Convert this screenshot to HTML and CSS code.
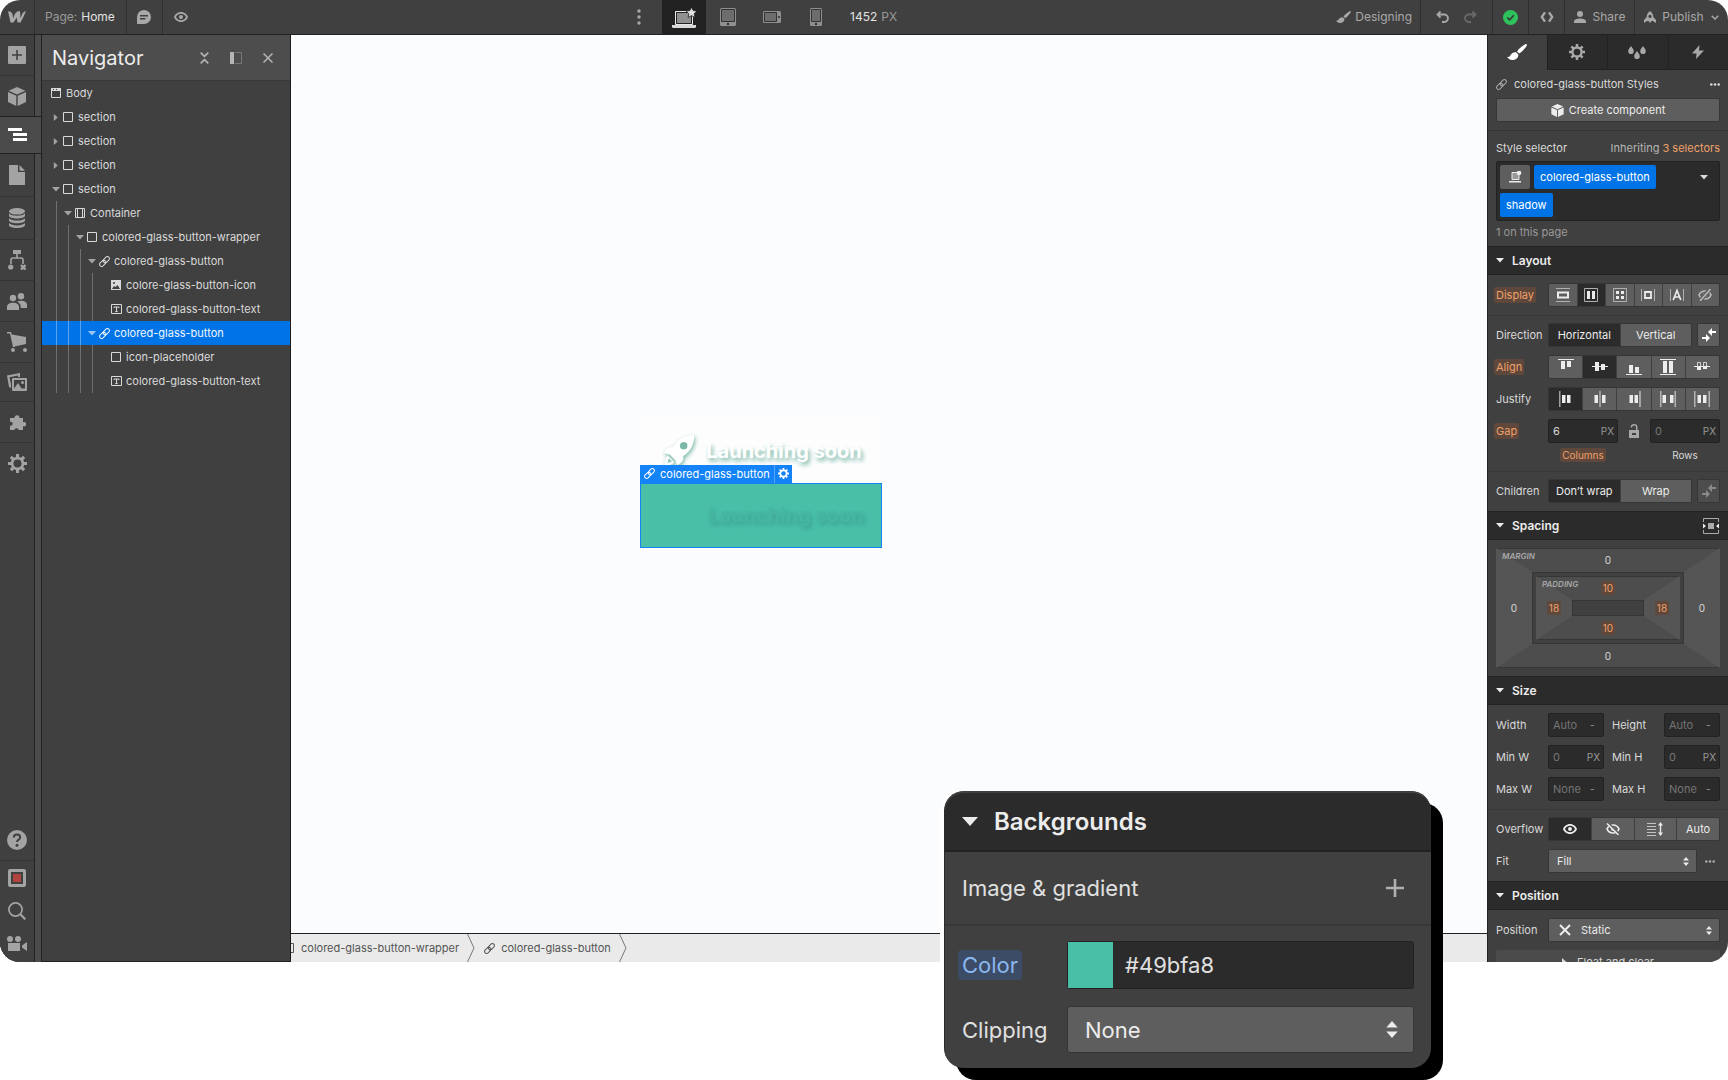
FILE: index.html
```html
<!DOCTYPE html>
<html lang="en">
<head>
<meta charset="utf-8">
<title>Designer - Home</title>
<link rel="stylesheet" href="styles.css">
</head>
<body>
<!-- icon sprite -->
<svg class="sprite" aria-hidden="true">
  <symbol id="i-logo" viewBox="0 0 18 12"><path d="M0 .3C2.500.3 4 1.300 4.500 3.500l.8 4C5.900 5 7 1.500 10 .3h2l.6 7C13.600 4.500 14.500.6 18 .3c-1.500 3.700-3.300 7.500-5.500 11.200h-3l-.8-5-3.200 5h-3z"/></symbol>
  <symbol id="i-comment" viewBox="0 0 14 14"><path fill-rule="evenodd" d="M7 0a7 7 0 1 1 0 14H0V7a7 7 0 0 1 7-7zM3 5v1.500h8V5zm0 3v1.500h5.500V8z"/></symbol>
  <symbol id="i-eye" viewBox="0 0 14 10"><path fill-rule="evenodd" d="M7 0c3.500 0 6 2.400 7 5-1 2.600-3.500 5-7 5S1 7.600 0 5c1-2.600 3.500-5 7-5zm0 1.800C4.500 1.800 2.800 3.200 2 5c.8 1.800 2.500 3.200 5 3.200s4.200-1.400 5-3.200c-.8-1.800-2.500-3.200-5-3.200zM7 3a2 2 0 1 1 0 4 2 2 0 0 1 0-4z"/></symbol>
  <symbol id="i-eye-off" viewBox="0 0 14 12"><path d="M1 6c1-2.300 3-4 6-4s5 1.700 6 4c-1 2.300-3 4-6 4S2 8.300 1 6z" fill="none" stroke="currentColor" stroke-width="1.700"/><circle cx="7" cy="6" r="2"/><path d="M1.500 0l11 11" stroke="#5e5e5e" stroke-width="3"/><path d="M1 .5L12.500 12" stroke="currentColor" stroke-width="1.500"/></symbol>
  <symbol id="i-dots-v" viewBox="0 0 4 16"><circle cx="2" cy="2" r="1.700"/><circle cx="2" cy="8" r="1.700"/><circle cx="2" cy="14" r="1.700"/></symbol>
  <symbol id="i-desktop" viewBox="0 0 24 21"><path d="M3.500 4.500h17v13h-17z" fill="#8f8f8f" stroke="#e8e8e8"/><path d="M4.500 5.500h15v11h-15z" fill="none" stroke="#222"/><path d="M0 18h24v1.500a1.500 1.500 0 0 1-1.500 1.500h-21A1.500 1.500 0 0 1 0 19.500z" fill="#d9d9d9"/><path d="M19.500.2l1.700 3.400 3.800.5-2.800 2.600.7 3.800-3.400-1.900-3.400 1.900.7-3.800L14 4.100l3.800-.5z" fill="#e2e2e2" stroke="#222" stroke-width=".8"/></symbol>
  <symbol id="i-tablet" viewBox="0 0 16 18"><rect width="16" height="18" rx="1.500" fill="#8f8f8f"/><path d="M1.500 1.500h13v12h-13z" fill="#6d6d6d" stroke="#333"/><circle cx="8" cy="16" r="1.200" fill="#333"/></symbol>
  <symbol id="i-landscape" viewBox="0 0 18 12"><rect width="18" height="12" rx="1.500" fill="#8f8f8f"/><path d="M1.500 1.500h12v9h-12z" fill="#6d6d6d" stroke="#333"/><circle cx="16" cy="6" r="1.100" fill="#333"/></symbol>
  <symbol id="i-phone" viewBox="0 0 12 18"><rect width="12" height="18" rx="1.500" fill="#8f8f8f"/><path d="M1.500 1.500h9v12h-9z" fill="#6d6d6d" stroke="#333"/><circle cx="6" cy="16" r="1.200" fill="#333"/></symbol>
  <symbol id="i-brush" viewBox="0 0 20 16"><path d="M18.300.2c1-.5 2 .4 1.400 1.500-1.300 2.300-4.500 6.200-7.600 7.800L10 7.400C11.800 4.700 15.800 1.500 18.300.2zM9 8.300l2.300 2.300C11.500 14 8.500 16 5.200 16 2.900 16 .9 14.800 0 12.800c1 .2 2.300.1 3-.9C4.200 9.800 6.300 7.900 9 8.300z"/></symbol>
  <symbol id="i-undo" viewBox="0 0 13 12"><path d="M4.500.5L1.500 3.500l3 3M1.800 3.500h6.400a3.700 3.700 0 0 1 0 7.500H6" fill="none" stroke="currentColor" stroke-width="1.900"/></symbol>
  <symbol id="i-redo" viewBox="0 0 13 12"><path d="M8.500.5l3 3-3 3M11.200 3.500H4.800a3.700 3.700 0 0 0 0 7.500H7" fill="none" stroke="currentColor" stroke-width="1.900"/></symbol>
  <symbol id="i-check" viewBox="0 0 15 15"><circle cx="7.500" cy="7.500" r="7.500"/><path d="M4.300 7.500l2.300 2.300 4.200-4.500" fill="none" stroke="#333" stroke-width="1.600"/></symbol>
  <symbol id="i-code" viewBox="0 0 14 10"><path d="M5 .3L1.800 5 5 9.700M9 .3L12.200 5 9 9.700" fill="none" stroke="currentColor" stroke-width="2.300"/></symbol>
  <symbol id="i-user" viewBox="0 0 12 12"><circle cx="6" cy="3" r="3"/><path d="M0 12v-1.500C0 8.500 3 7.500 6 7.500s6 1 6 3V12z"/></symbol>
  <symbol id="i-publish" viewBox="0 0 12 12"><path fill-rule="evenodd" d="M6 0c2 1.400 3.300 3.500 3.300 6L12 9v3l-3-2H7.500L6 12 4.500 10H3l-3 2V9l2.700-3C2.700 3.500 4 1.400 6 0zm0 3.800A1.600 1.600 0 1 0 6 7a1.600 1.600 0 0 0 0-3.200z"/></symbol>
  <symbol id="i-chevron" viewBox="0 0 8 5"><path d="M.7.7L4 4 7.300.7" fill="none" stroke="currentColor" stroke-width="1.500"/></symbol>
  <symbol id="i-plus-box" viewBox="0 0 18 18"><path fill-rule="evenodd" d="M1 0h16a1 1 0 0 1 1 1v16a1 1 0 0 1-1 1H1a1 1 0 0 1-1-1V1a1 1 0 0 1 1-1zm7.200 4v4.200H4v1.600h4.200V14h1.600V9.800H14V8.200H9.800V4z"/></symbol>
  <symbol id="i-cube" viewBox="0 0 18 19"><path d="M9 0l8.300 3.700L9 7.500.7 3.700zM0 5l8.300 3.800V19L0 15zM18 5L9.700 8.800V19l8.300-4z"/></symbol>
  <symbol id="i-nav" viewBox="0 0 19 13"><path d="M0 0h14v3H0zM5 5h14v3H5zM5 10h14v3H5z"/></symbol>
  <symbol id="i-page" viewBox="0 0 16 20"><path d="M0 0h9v7h7v13H0zM10.500 0L16 5.700h-5.500z"/></symbol>
  <symbol id="i-cms" viewBox="0 0 16 20"><ellipse cx="8" cy="3.300" rx="8" ry="3.300"/><path d="M0 5.300c1.500 1.800 4.500 2.500 8 2.500s6.500-.7 8-2.500v2.400c0 1.500-3.500 2.700-8 2.700S0 9.200 0 7.700z"/><path d="M0 10.300c1.500 1.500 4.500 2.300 8 2.300s6.500-.8 8-2.300v2.200c0 1.500-3.500 2.700-8 2.700s-8-1.200-8-2.700z"/><path d="M0 15.100c1.500 1.500 4.500 2.300 8 2.300s6.500-.8 8-2.300v2.200C16 18.800 12.500 20 8 20s-8-1.200-8-2.700z"/></symbol>
  <symbol id="i-tree" viewBox="0 0 18 20"><path d="M5 0h8v4H5z"/><path d="M9 4v4M3 14v-4a2 2 0 0 1 2-2h8a2 2 0 0 1 2 2v4" fill="none" stroke="currentColor" stroke-width="1.600"/><circle cx="2.700" cy="17" r="2.600"/><path d="M13 15l4.500 4.500M17.500 15L13 19.500" stroke="currentColor" stroke-width="2.400"/></symbol>
  <symbol id="i-users" viewBox="0 0 20 17"><circle cx="6" cy="5" r="3.200"/><circle cx="14" cy="3.200" r="3.200"/><path d="M0 17v-3c0-2.500 2-4.300 6-4.300s6 1.800 6 4.300v3zM10.500 8.700C11.500 8 12.500 7.800 14 7.800c4 0 6 1.700 6 4V15h-6.300v-1.500c0-2-1.200-3.800-3.200-4.800z"/></symbol>
  <symbol id="i-cart" viewBox="0 0 20 20"><path d="M0 0h4l.8 2.500L19 5v7L7.500 14.500 8 15H6L3 1.500H0z"/><circle cx="6" cy="18" r="2"/><circle cx="18" cy="18" r="2"/></symbol>
  <symbol id="i-assets" viewBox="0 0 20 18"><path d="M0 2.500L13 0v4h-2V2.600L2.500 4.200 4 11v4L2 14z"/><path fill-rule="evenodd" d="M6 5h13a1 1 0 0 1 1 1v11a1 1 0 0 1-1 1H6a1 1 0 0 1-1-1V6a1 1 0 0 1 1-1zm1 10.500L11 10l3.500 5.500H18V7H7z"/><circle cx="15.500" cy="9.500" r="1.500"/></symbol>
  <symbol id="i-puzzle" viewBox="0 0 17 17"><path d="M1 4h4.500a2.500 2.500 0 1 1 5-.5V4H14v4.300a2.200 2.200 0 1 1 0 3.800V16h-4.200a2.300 2.300 0 0 0-4.500 0H1v-4.300h.7a2 2 0 0 0 0-4H1z"/></symbol>
  <symbol id="i-gear" viewBox="0 0 20 20"><path d="M10 0v20M0 10h20M3 3l14 14M17 3L3 17" stroke="currentColor" stroke-width="3.200"/><circle cx="10" cy="10" r="5.700" fill="none" stroke="currentColor" stroke-width="3"/><circle cx="10" cy="10" r="4.200" fill="var(--hole, #404040)"/></symbol>
  <symbol id="i-help" viewBox="0 0 20 20"><circle cx="10" cy="10" r="10"/><path d="M6.800 7.500C6.800 5.500 8.200 4.500 10 4.500s3.200 1.100 3.200 2.900c0 2.200-3.200 2.300-3.200 4.600" fill="none" stroke="#404040" stroke-width="2"/><circle cx="10" cy="15.200" r="1.500" fill="#404040"/></symbol>
  <symbol id="i-record" viewBox="0 0 18 18"><rect x="1.500" y="1.500" width="15" height="15" rx=".5" fill="none" stroke="currentColor" stroke-width="3"/><path d="M5 5h8v8H5z" fill="#b0453f"/></symbol>
  <symbol id="i-search" viewBox="0 0 18 18"><circle cx="7.500" cy="7.500" r="6.600" fill="none" stroke="currentColor" stroke-width="1.700"/><path d="M12.300 12.300l5 5" stroke="currentColor" stroke-width="2.200"/></symbol>
  <symbol id="i-camera" viewBox="0 0 20 15"><circle cx="3" cy="3" r="3"/><circle cx="11" cy="3" r="3"/><path d="M1 7h12v8H1zM15 9.500L20 6v9l-5-3.500z"/></symbol>
  <symbol id="i-collapse" viewBox="0 0 9 12"><path d="M.7.7l3.800 3.600L8.300.7M.7 11.300l3.800-3.600 3.800 3.600" fill="none" stroke="currentColor" stroke-width="1.700"/></symbol>
  <symbol id="i-dock" viewBox="0 0 12 12"><path d="M0 0h4v12H0z"/><path d="M5 .5h6.500v11H5" fill="none" stroke="#777"/></symbol>
  <symbol id="i-close" viewBox="0 0 10 10"><path d="M.5.5l9 9M9.500.5l-9 9" stroke="currentColor" stroke-width="1.500"/></symbol>
  <symbol id="i-body" viewBox="0 0 11 11"><path d="M.5.500h9v9H.5z" fill="none" stroke="currentColor"/><path d="M0 0h10v3H0z"/><path d="M2 1.500h1M5 1.500h1" stroke="#404040"/></symbol>
  <symbol id="i-box" viewBox="0 0 11 11"><path d="M.5.5h9v9h-9z" fill="none" stroke="currentColor"/></symbol>
  <symbol id="i-container" viewBox="0 0 11 11"><path d="M.5.5h9v9h-9zM2.500.5v9M7.500.5v9" fill="none" stroke="currentColor"/></symbol>
  <symbol id="i-link" viewBox="0 0 11 11"><g fill="none" stroke="currentColor"><rect x="-3.500" y="-2" width="7" height="4" rx="2" transform="translate(3.700 7.300) rotate(-45)"/><rect x="-3.500" y="-2" width="7" height="4" rx="2" transform="translate(7.300 3.700) rotate(-45)"/></g></symbol>
  <symbol id="i-image" viewBox="0 0 11 11"><path fill-rule="evenodd" d="M0 0h10v10H0zm1 9h8L6.500 5 4.500 7 3 6zM3 2a1 1 0 1 0 0 2 1 1 0 0 0 0-2z"/></symbol>
  <symbol id="i-text" viewBox="0 0 11 11"><path d="M.5.5h10v9H.5z" fill="none" stroke="currentColor"/><path d="M3 4V3h5v1M5.500 3v5M4.300 7.600h2.400" fill="none" stroke="currentColor"/></symbol>
  <symbol id="i-caret" viewBox="0 0 8 5"><path d="M0 0h8L4 4.500z"/></symbol>
  <symbol id="i-caret-r" viewBox="0 0 5 8"><path d="M0 0l4.500 4L0 8z"/></symbol>
  <symbol id="i-drops" viewBox="0 0 18 14"><path d="M3 1c1.500 2 2.800 3.700 2.800 5.300a2.800 2.800 0 0 1-5.600 0C.2 4.700 1.500 3 3 1zM15 1c1.500 2 2.800 3.700 2.800 5.300a2.800 2.800 0 0 1-5.600 0C12.200 4.700 13.500 3 15 1zM9 6c1.500 2 2.800 3.500 2.800 5.200a2.800 2.800 0 0 1-5.600 0C6.200 9.500 7.500 8 9 6z"/></symbol>
  <symbol id="i-bolt" viewBox="0 0 12 14"><path d="M7.500 0L0 8.500h4.500L4 14l8-8.500H7z"/></symbol>
  <symbol id="i-dots" viewBox="0 0 10 3"><circle cx="1.300" cy="1.500" r="1.300"/><circle cx="5" cy="1.500" r="1.300"/><circle cx="8.700" cy="1.500" r="1.300"/></symbol>
  <symbol id="i-state" viewBox="0 0 13 12"><path d="M3 1.500h7v7H3z" fill="#999" stroke="currentColor"/><path d="M0 10h12v1.500H0z"/><circle cx="10" cy="2" r="2.300"/></symbol>
  <symbol id="i-block" viewBox="0 0 14 14"><path d="M0 .5h14M0 13.500h14" stroke="#b0b0b0"/><path d="M2 4.500h10v5H2z" fill="none" stroke="currentColor" stroke-width="2"/></symbol>
  <symbol id="i-flex" viewBox="0 0 14 14"><path d="M.5.5h13v13H.5z" fill="none" stroke="#b0b0b0"/><path d="M3 3h3v8H3zM8 3h3v8H8z"/></symbol>
  <symbol id="i-grid" viewBox="0 0 14 14"><path d="M.5.5h13v13H.5z" fill="none" stroke="#b0b0b0"/><path d="M3 3h3v3H3zM8 3h3v3H8zM3 8h3v3H3zM8 8h3v3H8z"/></symbol>
  <symbol id="i-inline-block" viewBox="0 0 14 14"><path d="M.5 1v12M13.500 1v12" stroke="#b0b0b0"/><path d="M4 4h6v6H4z" fill="none" stroke="currentColor" stroke-width="1.800"/></symbol>
  <symbol id="i-inline" viewBox="0 0 14 14"><path d="M.5 1v12M13.500 1v12" stroke="#b0b0b0"/><path d="M3.200 12L7 2.500 10.800 12M4.500 9h5" fill="none" stroke="currentColor" stroke-width="1.700"/></symbol>
  <symbol id="i-none" viewBox="0 0 14 12"><path d="M1 6c1-2.500 3-4 6-4s5 1.500 6 4c-1 2.500-3 4-6 4S2 8.500 1 6z" fill="none" stroke="#bbb" stroke-width="1.600"/><circle cx="7" cy="6" r="2.300" fill="#bbb"/><path d="M12 0L2 12" stroke="#5e5e5e" stroke-width="4"/><path d="M12.500 0L2 12" stroke="#bbb" stroke-width="1.500"/></symbol>
  <symbol id="i-reverse" viewBox="0 0 14 14"><path d="M6 4l4-4v3h4v2h-4v3zM8 10l-4 4v-3H0V9h4V6z"/></symbol>
  <symbol id="i-a-start" viewBox="0 0 16 16"><path d="M0 0h16v1H0zM3 2h4v8H3zM9 2h4v6H9z"/></symbol>
  <symbol id="i-a-center" viewBox="0 0 16 16"><path d="M0 7h16v1H0zM3 3h4v9H3zM9 5h4v6H9z"/></symbol>
  <symbol id="i-a-end" viewBox="0 0 16 16"><path d="M0 15h16v1H0zM3 6h4v8H3zM9 8h4v6H9z"/></symbol>
  <symbol id="i-a-stretch" viewBox="0 0 16 16"><path d="M0 0h16v1H0zM0 15h16v1H0zM3 2h4v12H3zM9 2h4v12H9z"/></symbol>
  <symbol id="i-a-base" viewBox="0 0 16 16"><path d="M0 7h16v1H0zM3 7h4v4H3zM9 7h4v3H9z"/><path d="M3.500 7V3.500h3V7M9.500 7V3.500h3V7" fill="none" stroke="currentColor" opacity=".8"/></symbol>
  <symbol id="i-j-start" viewBox="0 0 16 16"><path d="M1 0h1.500v16H1z" opacity=".6"/><path d="M4 4h3.500v8H4zM9 4h3.500v8H9z"/></symbol>
  <symbol id="i-j-center" viewBox="0 0 16 16"><path d="M7.300 0h1.400v16H7.300z" opacity=".6"/><path d="M2.500 4H6v8H2.500zM10 4h3.500v8H10z"/></symbol>
  <symbol id="i-j-end" viewBox="0 0 16 16"><path d="M13.500 0h1v16h-1zM3.500 4H7v8H3.500zM8.500 4H12v8H8.500z"/></symbol>
  <symbol id="i-j-between" viewBox="0 0 16 16"><path d="M0 0h1.500v16H0zM14.500 0H16v16h-1.500z" opacity=".6"/><path d="M2.500 4H6v8H2.500zM10 4h3.500v8H10z"/></symbol>
  <symbol id="i-j-around" viewBox="0 0 16 16"><path d="M0 0h1.500v16H0zM14.500 0H16v16h-1.500z" opacity=".6"/><path d="M3.500 4H7v8H3.500zM9 4h3.500v8H9z"/></symbol>
  <symbol id="i-lock" viewBox="0 0 10 14"><path fill-rule="evenodd" d="M0 6h10v8H0zm3 3v2h4V9z"/><path d="M2.500 3.500V3c0-1.300 1-2.200 2.500-2.200S7.700 1.700 7.700 3v3" fill="none" stroke="currentColor" stroke-width="1.500"/></symbol>
  <symbol id="i-spacing" viewBox="0 0 16 16"><path d="M.5 4V.5h15V4M.5 12v3.500h15V12" fill="none" stroke="#aaa"/><path d="M5 5h6v6H5z" fill="#aaa"/><path d="M0 5.500L3 8l-3 2.500zM16 5.500L13 8l3 2.500z"/></symbol>
  <symbol id="i-scroll" viewBox="0 0 16 14"><path d="M0 1.500h9M0 4.500h9M0 7.500h9M0 10.500h9M0 13.500h9" stroke="#c4c4c4"/><path d="M13.500 0L16 3.500h-1.800v7H16L13.500 14 11 10.500h1.800v-7H11z"/></symbol>
  <symbol id="i-sort" viewBox="0 0 6 9"><path d="M3 0l3 3.500H0zM3 9l3-3.500H0z"/></symbol>
  <symbol id="i-cross" viewBox="0 0 12 12"><path d="M1 1l10 10M11 1L1 11" stroke="currentColor" stroke-width="2"/></symbol>
  <symbol id="i-rocket" viewBox="0 0 34 34"><path fill-rule="evenodd" d="M33 0c.5 10-3.500 17-11.500 22.500.6 5-2.500 8-6.500 9.500l-2-5.500-5.500-5.500L1 19c1.500-4 5-7 10-6.500C16 4 23 .5 33 0zM22 7.500a4 4 0 1 0 0 8 4 4 0 0 0 0-8z"/><circle cx="22" cy="11.500" r="3.500" fill="#79b8a9"/><path d="M5 22l7 7c-2 2.500-6 4-10.500 4C1.500 28.500 2.700 24.500 5 22z"/><path d="M6.500 25l3 3c-1 1-2.500 1.500-4.500 1.500 0-2 .5-3.500 1.500-4.500z" fill="#8fc4b6"/></symbol>
  <symbol id="i-plus" viewBox="0 0 18 18"><path d="M7.700 0h2.600v7.700H18v2.600h-7.700V18H7.700v-7.700H0V7.700h7.700z"/></symbol>
  <symbol id="i-crumb" viewBox="0 0 8 28"><path d="M.5 0l6.500 14-6.500 14" fill="none" stroke="#777"/></symbol>
</svg>

<div class="page">
<div class="app">
  <header class="topbar">
    <div class="topbar-left">
      <button class="logo" aria-label="Menu"><svg width="18" height="12"><use href="#i-logo"/></svg></button>
      <button class="page-name"><span class="muted">Page:</span> Home</button>
      <button class="tool" aria-label="Comments"><svg width="14" height="14"><use href="#i-comment"/></svg></button>
      <button class="tool plain" aria-label="Preview"><svg width="14" height="10"><use href="#i-eye"/></svg></button>
    </div>
    <div class="breakpoints">
      <button class="bp-more" aria-label="More breakpoints"><svg width="4" height="16"><use href="#i-dots-v"/></svg></button>
      <button class="bp active" aria-label="Desktop"><svg width="24" height="21" class="spill"><use href="#i-desktop"/></svg></button>
      <button class="bp" aria-label="Tablet"><svg width="16" height="18"><use href="#i-tablet"/></svg></button>
      <button class="bp" aria-label="Mobile landscape"><svg width="18" height="12"><use href="#i-landscape"/></svg></button>
      <button class="bp" aria-label="Mobile portrait"><svg width="12" height="18"><use href="#i-phone"/></svg></button>
      <button class="canvas-width">1452 <span class="muted">PX</span></button>
    </div>
    <div class="topbar-right">
      <button class="mode"><svg width="15" height="14"><use href="#i-brush"/></svg>Designing</button>
      <div class="history">
        <button aria-label="Undo"><svg width="13" height="12"><use href="#i-undo"/></svg></button>
        <button aria-label="Redo" class="dim"><svg width="13" height="12"><use href="#i-redo"/></svg></button>
      </div>
      <button class="tool saved" aria-label="Saved"><svg width="15" height="15"><use href="#i-check"/></svg></button>
      <button class="tool" aria-label="Export code"><svg width="14" height="10"><use href="#i-code"/></svg></button>
      <button class="share"><svg width="12" height="12"><use href="#i-user"/></svg>Share</button>
      <button class="publish"><svg width="12" height="12"><use href="#i-publish"/></svg>Publish<svg class="chev" width="8" height="5"><use href="#i-chevron"/></svg></button>
    </div>
  </header>

  <div class="workspace">
    <nav class="rail">
      <button aria-label="Add"><svg width="18" height="18"><use href="#i-plus-box"/></svg></button>
      <button aria-label="Components"><svg width="18" height="19"><use href="#i-cube"/></svg></button>
      <button class="active" aria-label="Navigator"><svg width="19" height="13"><use href="#i-nav"/></svg></button>
      <button class="tall" aria-label="Pages"><svg width="16" height="20"><use href="#i-page"/></svg></button>
      <button class="tall" aria-label="CMS"><svg width="16" height="20"><use href="#i-cms"/></svg></button>
      <button aria-label="Logic"><svg width="18" height="20"><use href="#i-tree"/></svg></button>
      <button aria-label="Users"><svg width="20" height="17"><use href="#i-users"/></svg></button>
      <button aria-label="Ecommerce"><svg width="20" height="20"><use href="#i-cart"/></svg></button>
      <button class="short" aria-label="Assets"><svg width="20" height="18"><use href="#i-assets"/></svg></button>
      <button aria-label="Apps"><svg width="17" height="17"><use href="#i-puzzle"/></svg></button>
      <button class="plain" aria-label="Settings"><svg width="19" height="19"><use href="#i-gear"/></svg></button>
      <div class="rail-end">
        <button class="help" aria-label="Help"><svg width="20" height="20"><use href="#i-help"/></svg></button>
        <button aria-label="Audit"><svg width="18" height="18"><use href="#i-record"/></svg></button>
        <button aria-label="Search"><svg width="18" height="18"><use href="#i-search"/></svg></button>
        <button aria-label="Video tutorials"><svg width="20" height="15"><use href="#i-camera"/></svg></button>
      </div>
    </nav>

    <aside class="navigator">
      <div class="nav-head">
        <h1>Navigator</h1>
        <button aria-label="Collapse all"><svg width="9" height="12"><use href="#i-collapse"/></svg></button>
        <button aria-label="Pin panel"><svg width="12" height="12"><use href="#i-dock"/></svg></button>
        <button aria-label="Close"><svg width="10" height="10"><use href="#i-close"/></svg></button>
      </div>
      <ul class="tree">
        <li><button class="root"><svg class="type"><use href="#i-body"/></svg>Body</button></li>
        <li><button><svg class="arrow right"><use href="#i-caret-r"/></svg><svg class="type"><use href="#i-box"/></svg>section</button></li>
        <li><button><svg class="arrow right"><use href="#i-caret-r"/></svg><svg class="type"><use href="#i-box"/></svg>section</button></li>
        <li><button><svg class="arrow right"><use href="#i-caret-r"/></svg><svg class="type"><use href="#i-box"/></svg>section</button></li>
        <li><button><svg class="arrow"><use href="#i-caret"/></svg><svg class="type"><use href="#i-box"/></svg>section</button></li>
        <li><button><i></i><svg class="arrow"><use href="#i-caret"/></svg><svg class="type"><use href="#i-container"/></svg>Container</button></li>
        <li><button><i></i><i></i><svg class="arrow"><use href="#i-caret"/></svg><svg class="type"><use href="#i-box"/></svg>colored-glass-button-wrapper</button></li>
        <li><button><i></i><i></i><i></i><svg class="arrow"><use href="#i-caret"/></svg><svg class="type"><use href="#i-link"/></svg>colored-glass-button</button></li>
        <li><button><i></i><i></i><i></i><i></i><svg class="arrow"></svg><svg class="type"><use href="#i-image"/></svg>colore-glass-button-icon</button></li>
        <li><button><i></i><i></i><i></i><i></i><svg class="arrow"></svg><svg class="type"><use href="#i-text"/></svg>colored-glass-button-text</button></li>
        <li><button class="selected"><i></i><i></i><i></i><svg class="arrow"><use href="#i-caret"/></svg><svg class="type"><use href="#i-link"/></svg>colored-glass-button</button></li>
        <li><button><i></i><i></i><i></i><i></i><svg class="arrow"></svg><svg class="type"><use href="#i-box"/></svg>icon-placeholder</button></li>
        <li><button><i></i><i></i><i></i><i></i><svg class="arrow"></svg><svg class="type"><use href="#i-text"/></svg>colored-glass-button-text</button></li>
      </ul>
    </aside>

    <main class="stage">
      <div class="canvas">
        <div class="container">
          <div class="wrapper">
            <a class="glass-button first" href="#"><svg width="32" height="32"><use href="#i-rocket"/></svg><span>Launching soon</span></a>
            <a class="glass-button shadow" href="#"><span class="icon-placeholder"></span><span>Launching soon</span></a>
            <div class="element-tag">
              <span class="tag-name"><svg width="11" height="11"><use href="#i-link"/></svg>colored-glass-button</span>
              <button aria-label="Element settings"><svg width="11" height="11"><use href="#i-gear"/></svg></button>
            </div>
          </div>
        </div>
      </div>
      <nav class="crumbs">
        <a href="#" class="cut"><svg width="11" height="11"><use href="#i-box"/></svg>colored-glass-button-wrapper</a>
        <svg width="8" height="28"><use href="#i-crumb"/></svg>
        <a href="#"><svg width="11" height="11"><use href="#i-link"/></svg>colored-glass-button</a>
        <svg width="8" height="28"><use href="#i-crumb"/></svg>
      </nav>
    </main>

    <aside class="style-panel">
      <div class="tabs">
        <button class="active" aria-label="Style"><svg width="20" height="16"><use href="#i-brush"/></svg></button>
        <button aria-label="Settings"><svg width="16" height="16"><use href="#i-gear"/></svg></button>
        <button aria-label="Style manager"><svg width="18" height="14"><use href="#i-drops"/></svg></button>
        <button aria-label="Interactions"><svg width="12" height="14"><use href="#i-bolt"/></svg></button>
      </div>
      <div class="element-head">
        <div class="element-name"><svg width="11" height="11"><use href="#i-link"/></svg><span>colored-glass-button Styles</span><button aria-label="More"><svg width="10" height="3"><use href="#i-dots"/></svg></button></div>
        <button class="create"><svg width="13" height="13"><use href="#i-cube"/></svg>Create component</button>
      </div>
      <div class="selector">
        <div class="selector-title"><span>Style selector</span><span class="inherit">Inheriting <a href="#">3 selectors</a></span></div>
        <div class="selector-box">
          <button class="state" aria-label="Breakpoint state"><svg width="13" height="12"><use href="#i-state"/></svg></button>
          <button class="chip">colored-glass-button</button>
          <button class="selector-open" aria-label="States"><svg width="8" height="5"><use href="#i-caret"/></svg></button>
          <button class="chip">shadow</button>
        </div>
        <p>1 on this page</p>
      </div>

      <h2><svg width="8" height="5"><use href="#i-caret"/></svg>Layout</h2>
      <div class="group">
        <div class="row">
          <span class="label"><mark>Display</mark></span>
          <div class="segments">
            <button aria-label="Block"><svg width="14" height="14"><use href="#i-block"/></svg></button>
            <button class="on" aria-label="Flex"><svg width="14" height="14"><use href="#i-flex"/></svg></button>
            <button aria-label="Grid"><svg width="14" height="14"><use href="#i-grid"/></svg></button>
            <button aria-label="Inline block"><svg width="14" height="14"><use href="#i-inline-block"/></svg></button>
            <button aria-label="Inline"><svg width="14" height="14"><use href="#i-inline"/></svg></button>
            <button aria-label="None"><svg width="14" height="12"><use href="#i-none"/></svg></button>
          </div>
        </div>
      </div>
      <div class="group">
        <div class="row">
          <span class="label">Direction</span>
          <div class="segments"><button class="on">Horizontal</button><button>Vertical</button></div>
          <button class="square" aria-label="Reverse direction"><svg width="14" height="14"><use href="#i-reverse"/></svg></button>
        </div>
        <div class="row">
          <span class="label"><mark>Align</mark></span>
          <div class="segments">
            <button aria-label="Start"><svg width="16" height="16"><use href="#i-a-start"/></svg></button>
            <button class="on" aria-label="Center"><svg width="16" height="16"><use href="#i-a-center"/></svg></button>
            <button aria-label="End"><svg width="16" height="16"><use href="#i-a-end"/></svg></button>
            <button aria-label="Stretch"><svg width="16" height="16"><use href="#i-a-stretch"/></svg></button>
            <button aria-label="Baseline"><svg width="16" height="16"><use href="#i-a-base"/></svg></button>
          </div>
        </div>
        <div class="row">
          <span class="label">Justify</span>
          <div class="segments">
            <button class="on" aria-label="Start"><svg width="16" height="16"><use href="#i-j-start"/></svg></button>
            <button aria-label="Center"><svg width="16" height="16"><use href="#i-j-center"/></svg></button>
            <button aria-label="End"><svg width="16" height="16"><use href="#i-j-end"/></svg></button>
            <button aria-label="Space between"><svg width="16" height="16"><use href="#i-j-between"/></svg></button>
            <button aria-label="Space around"><svg width="16" height="16"><use href="#i-j-around"/></svg></button>
          </div>
        </div>
        <div class="row gap-row">
          <span class="label"><mark>Gap</mark></span>
          <div class="field"><input id="gap-col" value="6"><span>PX</span></div>
          <button class="lock" aria-label="Lock gap"><svg width="10" height="14"><use href="#i-lock"/></svg></button>
          <div class="field"><input id="gap-row" placeholder="0"><span>PX</span></div>
          <label class="under" for="gap-col"><mark>Columns</mark></label>
          <label class="under rows" for="gap-row">Rows</label>
        </div>
      </div>
      <div class="group">
        <div class="row">
          <span class="label">Children</span>
          <div class="segments"><button class="on">Don’t wrap</button><button>Wrap</button></div>
          <button class="square off" aria-label="Reverse wrap"><svg width="14" height="14"><use href="#i-reverse"/></svg></button>
        </div>
      </div>

      <h2><svg width="8" height="5"><use href="#i-caret"/></svg>Spacing<svg class="h2-end" width="16" height="16"><use href="#i-spacing"/></svg></h2>
      <div class="group">
        <div class="spacing margin">
          <em>MARGIN</em>
          <button class="t">0</button><button class="l">0</button><button class="r">0</button><button class="b">0</button>
          <div class="inset">
            <div class="spacing padding">
              <em>PADDING</em>
              <button class="t"><mark>10</mark></button><button class="l"><mark>18</mark></button><button class="r"><mark>18</mark></button><button class="b"><mark>10</mark></button>
              <div class="core"></div>
            </div>
          </div>
        </div>
      </div>

      <h2><svg width="8" height="5"><use href="#i-caret"/></svg>Size</h2>
      <div class="group sizes">
        <label for="w">Width</label><div class="field"><input id="w" placeholder="Auto"><span>-</span></div>
        <label for="h">Height</label><div class="field"><input id="h" placeholder="Auto"><span>-</span></div>
        <label for="minw">Min W</label><div class="field"><input id="minw" placeholder="0"><span>PX</span></div>
        <label for="minh">Min H</label><div class="field"><input id="minh" placeholder="0"><span>PX</span></div>
        <label for="maxw">Max W</label><div class="field"><input id="maxw" placeholder="None"><span>-</span></div>
        <label for="maxh">Max H</label><div class="field"><input id="maxh" placeholder="None"><span>-</span></div>
      </div>
      <div class="group">
        <div class="row">
          <span class="label">Overflow</span>
          <div class="segments">
            <button class="on" aria-label="Visible"><svg width="14" height="10"><use href="#i-eye"/></svg></button>
            <button aria-label="Hidden"><svg width="14" height="12"><use href="#i-eye-off"/></svg></button>
            <button aria-label="Scroll"><svg width="16" height="14"><use href="#i-scroll"/></svg></button>
            <button>Auto</button>
          </div>
        </div>
        <div class="row">
          <label class="label" for="fit">Fit</label>
          <div class="select"><select id="fit"><option>Fill</option></select><svg width="6" height="9"><use href="#i-sort"/></svg></div>
          <button class="more" aria-label="More"><svg width="10" height="3"><use href="#i-dots"/></svg></button>
        </div>
      </div>

      <h2><svg width="8" height="5"><use href="#i-caret"/></svg>Position</h2>
      <div class="group">
        <div class="row">
          <label class="label" for="pos">Position</label>
          <div class="select"><svg class="lead" width="12" height="12"><use href="#i-cross"/></svg><select id="pos"><option>Static</option></select><svg width="6" height="9"><use href="#i-sort"/></svg></div>
        </div>
        <button class="float"><svg width="5" height="8"><use href="#i-caret-r"/></svg>Float and clear</button>
      </div>
    </aside>
  </div>
</div>

<section class="callout">
  <h2><svg width="16" height="10"><use href="#i-caret"/></svg>Backgrounds</h2>
  <div class="callout-add"><span>Image &amp; gradient</span><button aria-label="Add image or gradient"><svg width="18" height="18"><use href="#i-plus"/></svg></button></div>
  <div class="callout-body">
    <label for="bg-color"><mark>Color</mark></label>
    <div class="color-field"><button aria-label="Pick color"></button><input id="bg-color" value="#49bfa8"></div>
    <label for="clip">Clipping</label>
    <div class="select"><select id="clip"><option>None</option></select><svg width="12" height="17"><use href="#i-sort"/></svg></div>
  </div>
</section>
</div>
</body>
</html>
```
FILE: styles.css
```css
* { box-sizing: border-box; }
body { margin: 0; background: #fff; font: 11px/16px Inter, "Liberation Sans", sans-serif; color: #d9d9d9; }
button, input, select { font: inherit; color: inherit; margin: 0; padding: 0; border: 0; background: none; border-radius: 0; }
button { display: flex; align-items: center; justify-content: center; white-space: nowrap; }
a { color: inherit; text-decoration: none; }
ul { list-style: none; margin: 0; padding: 0; }
h1, h2, p { margin: 0; }
svg { fill: currentColor; flex: none; display: block; }
.spill { overflow: visible; }
.sprite { position: absolute; width: 0; height: 0; }
mark { background: #5f483b; color: #f0a06a; border-radius: 2px; }

.page { position: relative; height: 100vh; overflow: hidden; }
.app { height: calc(100vh - 118px); display: flex; flex-direction: column; border-radius: 20px; overflow: hidden; background: #404040; }

/* top bar */
.topbar { display: flex; flex: none; height: 35px; border-bottom: 1px solid #222; color: #a8a8a8; font-size: 12px; }
.topbar-left, .topbar-right { flex: 1; display: flex; }
.topbar-right { justify-content: flex-end; }
.topbar-left > button, .topbar-right > button, .history { border-right: 1px solid #303030; }
.topbar .plain, .topbar .publish { border-right: 0; }
.muted { color: #999; }
.logo { width: 35px; }
.page-name { padding: 0 11px 0 10px; gap: 4px; color: #e3e3e3; }
.tool { width: 36px; }
.saved { color: #2fc15b; }
.breakpoints { display: flex; width: 474px; }
.bp-more { width: 35px; padding-right: 12px; }
.bp { width: 44px; }
.bp.active { background: #212121; }
.canvas-width { padding-left: 12px; gap: 4px; color: #e3e3e3; }
.mode { gap: 4px; padding: 0 8px; }
.history { display: flex; width: 72px; justify-content: center; gap: 15px; }
.dim { color: #686868; }
.share { width: 70px; gap: 7px; }
.publish { width: 93px; gap: 6px; }
.chev { margin-left: 1px; }

.workspace { display: flex; flex: 1; min-height: 0; }

/* left rail */
.rail { display: flex; flex-direction: column; width: 42px; flex: none; background: #4b4b4b; border-right: 1px solid #222; color: #a3a3a3; }
.rail button { width: 35px; height: 41px; flex: none; background: #404040; border-right: 1px solid #222; border-bottom: 1px solid #333; }
.rail button.active { height: 37px; width: 41px; padding: 0 6px 2px 0; background: #4b4b4b; color: #fff; border-right: 0; border-color: #222; box-shadow: 0 -1px #222; }
.rail button.tall { height: 43px; }
.rail button.short { height: 39px; }
.rail button.plain { border-bottom: 0; }
.rail-end { flex: 1; width: 35px; display: flex; flex-direction: column; justify-content: flex-end; background: #404040; border-right: 1px solid #222; padding-bottom: 2px; }
.rail .rail-end button { width: 34px; height: 33px; border: 0; }
.rail .rail-end .help { height: 42px; border-bottom: 1px solid #333; }

/* navigator */
.navigator { width: 249px; flex: none; border-right: 1px solid #1c1c1c; border-bottom: 1px solid #222; }
.nav-head { display: flex; align-items: center; height: 46px; padding: 0 17px 0 10px; gap: 21px; background: #4d4d4d; border-bottom: 1px solid #383838; color: #b5b5b5; }
.nav-head h1 { flex: 1; font-size: 20px; line-height: 24px; font-weight: 400; color: #ececec; }
.tree button { width: 100%; height: 24px; padding-left: 8px; justify-content: flex-start; }
.tree .root { padding-left: 9px; }
.tree .root .type { margin-left: 0; }
.tree i { align-self: stretch; width: 6px; margin-left: 6px; border-left: 1px solid #707070; }
.tree .arrow { width: 12px; height: 5px; color: #a3a3a3; }
.tree .arrow.right { height: 7px; }
.tree .type { width: 11px; height: 11px; margin: 0 4px 0 1px; }
.tree .selected { background: #0073e6; color: #f2f7fd; }
.tree .selected i { border-color: #5ba3ee; }
.tree .selected .arrow { color: #9ac6f4; }

/* canvas */
.stage { flex: 1; min-width: 0; display: flex; flex-direction: column; background: #fbfcfe; }
.canvas { flex: 1; display: flex; align-items: center; padding-bottom: 2px; }
.container { width: 100%; max-width: 940px; display: flex; justify-content: center; }
.wrapper { position: relative; width: 242px; }
.glass-button { display: flex; align-items: center; justify-content: center; height: 64px; gap: 11px; padding: 10px 17px 10px 20px; font-size: 20px; line-height: 24px; font-weight: 700; color: #fff; white-space: nowrap; }
.glass-button.first { background: #fdfdfd; text-shadow: 2px 3px 4px #74b5a5; }
.first svg { filter: drop-shadow(1px 2px 2px #74b5a5); }
.glass-button.shadow { height: 65px; background: #49bfa8; border: 1px solid #1483f8; color: #45b7a1; text-shadow: 2px 3px 4px #3ca291; }
.icon-placeholder { width: 36px; }
.element-tag { position: absolute; left: 0; top: 46px; display: flex; height: 18px; background: #1483f8; color: #fff; }
.tag-name { display: flex; align-items: center; gap: 5px; padding: 0 4px; border-right: 1px solid #58a6fa; }
.element-tag button { width: 17px; --hole: #1483f8; }
.crumbs { display: flex; flex: none; height: 29px; border-top: 1px solid #222; background: #eaeaea; color: #555; overflow: hidden; }
.crumbs a { display: flex; align-items: center; gap: 6px; padding: 0 8px 0 9px; }
.crumbs .cut { padding-left: 0; margin-left: -7px; }

/* style panel */
.style-panel { width: 241px; flex: none; border-left: 1px solid #222; overflow: hidden; }
.tabs { display: grid; grid-template-columns: 59px repeat(3, 1fr); height: 35px; color: #a8a8a8; --hole: #2b2b2b; }
.tabs button { background: #2b2b2b; border-left: 1px solid #222; border-bottom: 1px solid #222; padding-right: 1px; }
.tabs .active { background: #404040; border: 0; color: #fff; padding: 0 2px 2px 0; }
.element-head { padding: 6px 8px 8px; border-bottom: 1px solid #333; }
.element-name { display: flex; align-items: center; gap: 7px; height: 16px; margin-bottom: 6px; }
.element-name > svg { color: #a8a8a8; }
.element-name span { flex: 1; }
.create { width: 100%; height: 24px; gap: 5px; background: #5e5e5e; border: 1px solid #363636; border-radius: 2px; color: #ececec; }
.selector { padding: 9px 8px 6px; }
.selector-title { display: flex; justify-content: space-between; margin-bottom: 5px; }
.inherit { color: #b5b5b5; }
.inherit a { color: #f0a06a; }
.selector-box { display: grid; grid-template-columns: 30px auto 1fr; gap: 4px; padding: 3px; background: #2b2b2b; border: 1px solid #222; border-radius: 2px; }
.selector-box button { height: 24px; border-radius: 2px; }
.state { background: #5e5e5e; color: #ececec; }
.chip { background: #0073e6; color: #fff; padding: 0 6px; justify-self: start; }
.chip:last-child { grid-column: 1 / 3; }
.selector-open { justify-self: end; width: 24px; }
.selector p { color: #999; margin-top: 3px; }
.style-panel h2 { display: flex; align-items: center; gap: 8px; height: 29px; padding: 0 9px 0 8px; font-size: 12px; line-height: 16px; font-weight: 600; background: #2b2b2b; border-top: 1px solid #222; border-bottom: 1px solid #222; color: #ececec; }
.h2-end { margin-left: auto; }
.group { display: flex; flex-direction: column; gap: 8px; padding: 8px; }
.group + .group { border-top: 1px solid #383838; padding-top: 7px; }
.row { display: flex; align-items: center; }
.label { width: 52px; flex: none; }
.label mark { padding: 1px 2px; margin-left: -2px; }
.segments { flex: 1; display: flex; height: 24px; background: #5e5e5e; border: 1px solid #363636; border-radius: 2px; color: #ececec; }
.segments button { flex: 1; border-right: 1px solid #404040; }
.segments button:last-child { border-right: 0; }
.segments .on { background: #2b2b2b; }
.square { width: 23px; height: 24px; margin-left: 5px; background: #5e5e5e; border: 1px solid #363636; border-radius: 2px; color: #fff; }
.square.off { background: #4d4d4d; color: #8a8a8a; }
.field { display: flex; align-items: center; height: 24px; padding: 0 3px 0 4px; background: #2b2b2b; border: 1px solid #222; border-radius: 2px; }
.field input { flex: 1; min-width: 0; width: 0; }
.field input::placeholder { color: #757575; opacity: 1; }
.field span { min-width: 10px; font-size: 10px; color: #999; }
.gap-row { display: grid; grid-template-columns: 52px 70px 32px 70px; row-gap: 4px; }
.lock { color: #a8a8a8; }
.under { grid-column: 2; text-align: center; font-size: 10px; }
.under mark { padding: 1px 2px; }
.under.rows { grid-column: 4; }

.spacing { position: relative; display: grid; grid-template-columns: 36px 1fr 36px; grid-template-rows: 24px 1fr 24px; background: #4d4d4d; outline: 1px solid #363636; outline-offset: -1px; font-size: 10px; }
.spacing::before { content: ""; position: absolute; inset: 0; background: #555; clip-path: polygon(0 0, 36px 24px, calc(100% - 36px) 24px, 100% 0, 100% 100%, calc(100% - 36px) calc(100% - 24px), 36px calc(100% - 24px), 0 100%); }
.margin { height: 120px; }
.padding { height: 64px; }
.spacing > * { position: relative; }
.spacing em { position: absolute; left: 6px; top: 2px; font-size: 8px; line-height: 12px; font-weight: 600; color: #a8a8a8; }
.spacing mark { padding: 0 2px; line-height: 14px; }
.t { grid-area: 1 / 2; }
.l { grid-area: 2 / 1; }
.r { grid-area: 2 / 3; }
.b { grid-area: 3 / 2; }
.inset { grid-area: 2 / 2; background: #404040; border: 1px solid #363636; padding: 3px; }
.core { grid-area: 2 / 2; background: #404040; border: 1px solid #363636; }

.sizes { display: grid; grid-template-columns: 52px 1fr 60px 1fr; column-gap: 0; align-items: center; }
.sizes label:nth-of-type(even) { padding-left: 8px; }
.select { flex: 1; display: flex; align-items: center; height: 24px; background: #5e5e5e; border: 1px solid #363636; border-radius: 2px; padding-right: 7px; color: #ececec; }
.select select { appearance: none; flex: 1; min-width: 0; height: 100%; padding-left: 8px; outline: 0; }
.select .lead { margin: 0 2px 0 10px; }
.more { width: 23px; padding-left: 3px; color: #a8a8a8; }
.float { height: 24px; gap: 10px; background: #4b4b4b; border-radius: 2px; }

/* floating backgrounds card */
.callout { position: absolute; left: 944px; bottom: 12px; width: 487px; background: #404040; border-left: 1px solid #2b2b2b; border-radius: 20px; box-shadow: 12px 12px 0 #000, -4px 0 0 #fff; font-size: 22px; line-height: 28px; color: #e0e0e0; }
.callout h2 { display: flex; align-items: center; gap: 16px; height: 61px; padding: 0 17px; font-size: 24px; line-height: 28px; font-weight: 600; background: #2b2b2b; border-top: 2px solid #404040; border-bottom: 2px solid #222; border-radius: 20px 20px 0 0; color: #ececec; }
.callout-add { display: flex; align-items: center; justify-content: space-between; height: 74px; padding: 0 27px 0 17px; border-bottom: 2px solid #383838; }
.callout-add svg { color: #b0b0b0; }
.callout-body { display: grid; grid-template-columns: 105px minmax(0, 1fr); row-gap: 17px; align-items: center; padding: 15px 17px; }
.callout mark { background: #3d4c66; color: #8ab7f0; border-radius: 4px; padding: 2px 4px; margin-left: -4px; }
.color-field { display: flex; height: 48px; background: #2b2b2b; border: 1px solid #222; border-radius: 3px; }
.color-field button { width: 45px; background: #49bfa8; }
.color-field input { flex: 1; min-width: 0; padding-left: 12px; }
.callout .select { height: 47px; border-radius: 3px; padding-right: 15px; }
.callout select { padding-left: 17px; }
```
